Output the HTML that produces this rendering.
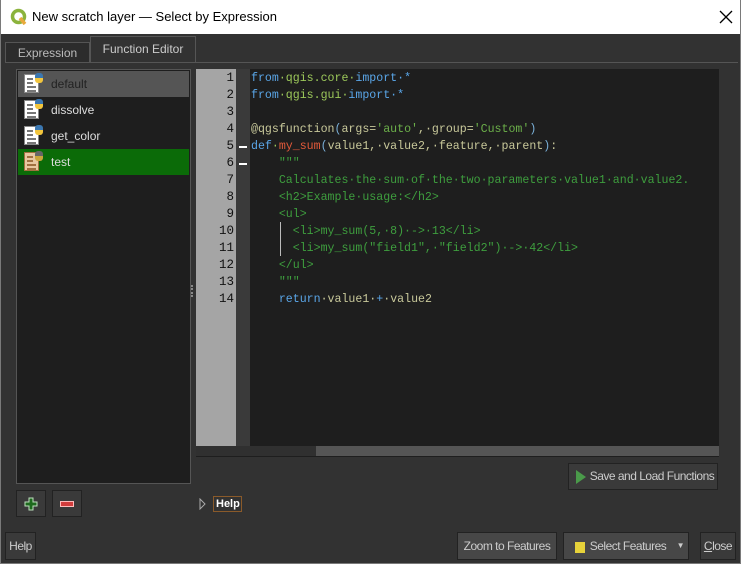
<!DOCTYPE html><html><head><style>
*{margin:0;padding:0;box-sizing:border-box}
body{width:741px;height:564px;background:#7a7a7a;font-family:"Liberation Sans",sans-serif;font-size:12px;color:#ddd;position:relative;overflow:hidden}
.win{position:absolute;left:1px;top:0;width:739px;height:563px;background:#323232}
.title{position:absolute;left:0;top:0;width:739px;height:34px;background:#fff;color:#000;font-size:13px}
.abs{position:absolute}
.btn{position:absolute;background:#3a3a3a;border:1px solid #222;color:#ccc;font-size:12px;letter-spacing:-0.5px;text-align:center;white-space:nowrap}
.code{position:absolute;left:250px;top:70px;font-family:"Liberation Mono",monospace;font-size:11.6px;line-height:17px;white-space:pre}
.ln{position:absolute;left:195px;top:70px;width:38px;text-align:right;font-family:"Liberation Mono",monospace;font-size:12.5px;line-height:17px;color:#111;white-space:pre}
.k{color:#5aa6e8}.g{color:#9cc85a}.s{color:#6cb04a}.d{color:#3e9e3e}.f{color:#e35a3a}.n{color:#c8c89a}.p{color:#7ab0d8}
.item{position:absolute;left:17px;width:171px;height:26px;line-height:26px;padding-left:33px;font-size:12px;color:#ddd}
.ic{position:absolute;left:6px;top:3px;width:15px;height:19px;background:#fff;border:1px solid #888}
.ic i{position:absolute;left:2px;height:2px;background:#777;width:9px}
.py{position:absolute;left:17px;top:2px;width:8px;height:10px;background:linear-gradient(#3b77b0 50%,#f2c53d 50%);border-radius:3px}
</style></head><body><div class="win">
<div class="title">
<svg class="abs" style="left:9px;top:8px" width="18" height="18" viewBox="0 0 18 18"><circle cx="8.5" cy="8.5" r="6" fill="none" stroke="#8bb33c" stroke-width="3.5"/><path d="M10 10 L15 16" stroke="#e8a93c" stroke-width="3.5"/></svg>
<div class="abs" style="left:31px;top:9px">New scratch layer — Select by Expression</div>
<svg class="abs" style="left:718px;top:10px" width="14" height="14"><path d="M1 1L13 13M13 1L1 13" stroke="#000" stroke-width="1.3"/></svg>
</div>
<div class="abs" style="left:4px;top:42px;width:85px;height:20px;background:#2c2c2c;border:1px solid #555;border-bottom:none;color:#bbb;text-align:center;line-height:20px">Expression</div>
<div class="abs" style="left:89px;top:36px;width:106px;height:27px;background:#323232;border:1px solid #555;border-bottom:none;color:#ccc;text-align:center;line-height:24px">Function Editor</div>
<div class="abs" style="left:4px;top:62px;width:733px;height:1px;background:#555"></div>
<div class="abs" style="left:15px;top:69px;width:175px;height:415px;background:#1e1e1e;border:1px solid #555"></div>
<div class="item" style="top:71px;background:#555;color:#222"><div class="ic"><i style="top:3px;width:6px"></i><i style="top:7px;width:6px"></i><i style="top:11px"></i><i style="top:15px"></i></div><div class="py"></div>default</div>
<div class="item" style="top:97px"><div class="ic"><i style="top:3px;width:6px"></i><i style="top:7px;width:6px"></i><i style="top:11px"></i><i style="top:15px"></i></div><div class="py"></div>dissolve</div>
<div class="item" style="top:123px"><div class="ic"><i style="top:3px;width:6px"></i><i style="top:7px;width:6px"></i><i style="top:11px"></i><i style="top:15px"></i></div><div class="py"></div>get_color</div>
<div class="item" style="top:149px;background:#0b6b08"><div class="ic" style="background:#e8c7a0;border-color:#a07040"><i style="top:3px;width:6px;background:#a07040"></i><i style="top:7px;width:6px;background:#a07040"></i><i style="top:11px;background:#a07040"></i><i style="top:15px;background:#a07040"></i></div><div class="py" style="background:linear-gradient(#666 50%,#c9a63a 50%)"></div>test</div>
<div class="abs" style="left:190px;top:285px;width:2px;height:12px;border-left:2px dotted #888"></div>
<div class="abs" style="left:195px;top:69px;width:523px;height:388px;background:#1e1e1e"></div>
<div class="abs" style="left:195px;top:69px;width:40px;height:377px;background:#a5a5a5"></div>
<div class="abs" style="left:235px;top:69px;width:14px;height:377px;background:#3a3a3a"></div>
<div class="abs" style="left:195px;top:446px;width:523px;height:10px;background:#555"></div>
<div class="abs" style="left:195px;top:446px;width:120px;height:10px;background:#303030"></div>
<div class="ln">1
2
3
4
5
6
7
8
9
10
11
12
13
14</div>
<div class="abs" style="left:238px;top:146px;width:8px;height:2px;background:#fff"></div>
<div class="abs" style="left:238px;top:163px;width:8px;height:2px;background:#fff"></div>
<div class="abs" style="left:279px;top:222px;width:1px;height:34px;background:#bbb"></div>
<div class="code"><span class="k">from</span><span class="g">·qgis.core·</span><span class="k">import·*</span>
<span class="k">from</span><span class="g">·qgis.gui·</span><span class="k">import·*</span>

<span class="n">@qgsfunction</span><span class="p">(</span><span class="n">args=</span><span class="s">'auto'</span><span class="n">,·group=</span><span class="s">'Custom'</span><span class="p">)</span>
<span class="k">def</span><span class="g">·</span><span class="f">my_sum</span><span class="p">(</span><span class="n">value1,·value2,·feature,·parent</span><span class="p">)</span><span class="n">:</span>
<span class="d">    """
    Calculates·the·sum·of·the·two·parameters·value1·and·value2.
    &lt;h2&gt;Example·usage:&lt;/h2&gt;
    &lt;ul&gt;
      &lt;li&gt;my_sum(5,·8)·-&gt;·13&lt;/li&gt;
      &lt;li&gt;my_sum("field1",·"field2")·-&gt;·42&lt;/li&gt;
    &lt;/ul&gt;
    """</span>
    <span class="k">return</span><span class="n">·value1·</span><span class="k">+</span><span class="n">·value2</span></div>
<div class="btn" style="left:567px;top:463px;width:150px;height:27px;line-height:25px;padding-left:18px">Save and Load Functions<svg class="abs" style="left:7px;top:6px" width="10" height="14"><path d="M0 0L10 7L0 14Z" fill="#4a9a4a"/></svg></div>
<div class="btn" style="left:15px;top:490px;width:30px;height:27px"><svg style="margin-top:6px" width="14" height="14"><path d="M5 1H9V5H13V9H9V13H5V9H1V5H5Z" fill="#1e6a1e" stroke="#bfe0bf" stroke-width="1"/></svg></div>
<div class="btn" style="left:51px;top:490px;width:30px;height:27px"><div style="margin:10px auto 0;width:14px;height:6px;background:#d23c3c;border:1px solid #fbb"></div></div>
<svg class="abs" style="left:198px;top:498px" width="8" height="12"><path d="M1 1L6 6L1 11Z" fill="none" stroke="#aaa"/></svg>
<div class="abs" style="left:212px;top:496px;width:29px;height:16px;border:1px solid #8a5a2a;color:#fff;font-weight:bold;font-size:11px;line-height:14px;padding-left:2px">Help</div>
<div class="btn" style="left:4px;top:532px;width:31px;height:28px;line-height:26px">Help</div>
<div class="btn" style="left:456px;top:532px;width:100px;height:28px;line-height:26px;background:#474747">Zoom to Features</div>
<div class="btn" style="left:562px;top:532px;width:126px;height:28px;line-height:26px;background:#474747;padding-right:6px;padding-left:10px">Select Features<div class="abs" style="left:11px;top:9px;width:10px;height:11px;background:#e6d23a"></div><span class="abs" style="right:4px;top:0;font-size:8px">▼</span></div>
<div class="btn" style="left:699px;top:532px;width:36px;height:28px;line-height:26px"><u>C</u>lose</div>
</div></body></html>
